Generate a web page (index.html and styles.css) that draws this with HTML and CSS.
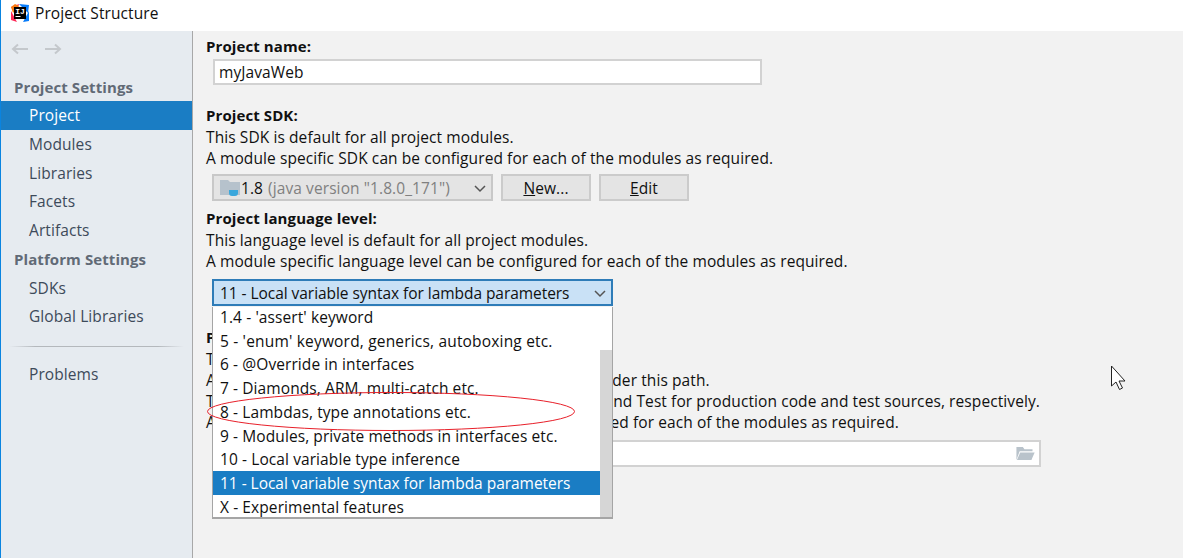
FILE: index.html
```html
<!DOCTYPE html>
<html>
<head>
  <title>Project Structure</title>
  <link rel="stylesheet" href="styles.css">
</head>
<body>
  <div class="titlebar">
    <svg class="app-icon" width="20" height="20" viewBox="0 0 20 20">
      <path d="M1 4 L9 1 L6 12 Z" fill="#fe315d"/>
      <path d="M9 1 L19 2 L18 10 Z" fill="#087cfa"/>
      <path d="M1 8 L7 19 L1 17 Z" fill="#fe2857"/>
      <path d="M13 19 L19 8 L19 18 Z" fill="#087cfa"/>
      <path d="M1 4 L5 1 L9 3 L3 10 Z" fill="#f97a12"/>
      <rect x="4" y="4" width="12" height="12" fill="#000"/>
      <rect x="5.5" y="13" width="5" height="1" fill="#fff"/>
      <text x="5.2" y="11.2" class="app-icon-text">IJ</text>
    </svg>
    <span class="title">Project Structure</span>
  </div>

  <div class="window">
    <div class="sidebar">
      <div class="nav-arrows">
        <svg width="18" height="12" viewBox="0 0 18 12"><path d="M17 6H2M7 1.5 2 6l5 4.500" fill="none" stroke="#c4c8cc" stroke-width="2"/></svg>
        <svg width="18" height="12" viewBox="0 0 18 12"><path d="M1 6h15M11 1.500 16 6l-5 4.500" fill="none" stroke="#c4c8cc" stroke-width="2"/></svg>
      </div>
      <div class="group-title">Project Settings</div>
      <div class="nav-item active">Project</div>
      <div class="nav-item">Modules</div>
      <div class="nav-item">Libraries</div>
      <div class="nav-item">Facets</div>
      <div class="nav-item">Artifacts</div>
      <div class="group-title second">Platform Settings</div>
      <div class="nav-item">SDKs</div>
      <div class="nav-item">Global Libraries</div>
      <div class="nav-sep"></div>
      <div class="nav-item">Problems</div>
    </div>

    <div class="content">
      <div class="label">Project name:</div>
      <div class="text-input name-input">myJavaWeb</div>

      <div class="label sdk-label">Project SDK:</div>
      <div class="desc">This SDK is default for all project modules.</div>
      <div class="desc">A module specific SDK can be configured for each of the modules as required.</div>
      <div class="sdk-row">
        <div class="combo sdk-combo">
          <svg class="sdk-icon" width="21" height="20" viewBox="0 0 21 20">
            <path d="M0 2h8l2 2h10v13H0z" fill="#b6c2cc"/>
            <path d="M9 12h9v3a3 3 0 0 1-3 3h-3a3 3 0 0 1-3-3z" fill="#3aa7dc"/>
          </svg>
          <span>1.8</span><span class="muted">(java version "1.8.0_171")</span>
          <svg class="chevron" width="14" height="8" viewBox="0 0 14 8"><path d="M2 1l5 5 5-5" fill="none" stroke="#555" stroke-width="1.500"/></svg>
        </div>
        <div class="btn"><span><u>N</u>ew...</span></div>
        <div class="btn"><span><u>E</u>dit</span></div>
      </div>

      <div class="label level-label">Project language level:</div>
      <div class="desc">This language level is default for all project modules.</div>
      <div class="desc">A module specific language level can be configured for each of the modules as required.</div>
      <div class="combo level-combo">
        <span>11 - Local variable syntax for lambda parameters</span>
        <svg class="chevron" width="14" height="8" viewBox="0 0 14 8"><path d="M2 1l5 5 5-5" fill="none" stroke="#555" stroke-width="1.500"/></svg>
      </div>

      <div class="label output-label">Project compiler output:</div>
      <div class="desc">This path is used to store all project compilation results.</div>
      <div class="desc">A directory corresponding to each module is created under this path.</div>
      <div class="desc">This directory contains two subdirectories: Production and Test for production code and test sources, respectively.</div>
      <div class="desc">A module specific compiler output path can be configured for each of the modules as required.</div>
      <div class="text-input output-input">
        <svg class="folder" width="20" height="15" viewBox="0 0 18 14">
          <path d="M1 13V1h6l1.500 2H16v2H4z" fill="#b9c3cb"/>
          <path d="M4.500 6H18l-3 7H1.500z" fill="#b9c3cb"/>
        </svg>
      </div>

      <div class="popup">
        <div class="popup-list">
          <div class="popup-item">1.4 - 'assert' keyword</div>
          <div class="popup-item wide">5 - 'enum' keyword, generics, autoboxing etc.</div>
          <div class="popup-item">6 - @Override in interfaces</div>
          <div class="popup-item">7 - Diamonds, ARM, multi-catch etc.</div>
          <div class="popup-item">8 - Lambdas, type annotations etc.</div>
          <div class="popup-item">9 - Modules, private methods in interfaces etc.</div>
          <div class="popup-item">10 - Local variable type inference</div>
          <div class="popup-item selected">11 - Local variable syntax for lambda parameters</div>
          <div class="popup-item">X - Experimental features</div>
        </div>
        <div class="popup-scroll"><div class="popup-thumb"></div></div>
      </div>
    </div>
  </div>

  <!-- red circle drawn on the screenshot -->
  <svg class="annotation" width="372" height="42" viewBox="0 0 372 42">
    <ellipse cx="186" cy="20.500" rx="183.500" ry="19" fill="none" stroke="#e8202a" stroke-width="1"/>
  </svg>

  <svg class="cursor" width="18" height="26" viewBox="0 0 18 26">
    <path d="M1.500 1v20l4.500-4 3.500 7.500 3-1.500-3.500-7h6z" fill="#fff" stroke="#222" stroke-width="1"/>
  </svg>
</body>
</html>
```

FILE: styles.css
```css
:root {
  --blue: #1a7dc4;
  --panel: #f2f2f2;
  --side: #e6ebf0;
  --text: #101010;
}

* {
  box-sizing: border-box;
}

html, body {
  height: 100%;
}

body {
  margin: 0;
  overflow: hidden;
  position: relative;
  display: flex;
  flex-direction: column;
  border-left: 1px solid #0a84e0;
  font-family: "Open Sans", "Noto Sans", Arial, sans-serif;
  font-size: 15.500px;
  letter-spacing: 0.09px;
  color: var(--text);
  background: var(--panel);
}

.titlebar {
  height: 31px;
  flex: none;
  display: flex;
  align-items: center;
  padding: 0 0 5px 9px;
  background: #fff;
}

.app-icon {
  margin-right: 5px;
}

.app-icon-text {
  font-family: "Liberation Mono", monospace;
  font-size: 8px;
  font-weight: 700;
  fill: #fff;
}

.window {
  flex: 1;
  display: flex;
  min-height: 0;
}

.sidebar {
  width: 192px;
  flex: none;
  background: var(--side);
  border-right: 1px solid #a8a8a8;
  color: #3d4a5a;
}

.nav-arrows {
  height: 38px;
  display: flex;
  align-items: center;
  gap: 15px;
  padding: 0 0 3px 10px;
}

.group-title {
  height: 32px;
  display: flex;
  align-items: center;
  padding: 3px 0 0 13px;
  font-weight: 700;
  font-size: 15px;
  color: #616a76;
}

.group-title.second {
  height: 30px;
  margin-top: -1px;
  padding-top: 2px;
}

.nav-item {
  height: 28.700px;
  display: flex;
  align-items: center;
  padding-left: 28px;
}

.nav-item.active {
  background: var(--blue);
  color: #fff;
}

.nav-sep {
  height: 1px;
  margin: 15px 8px 13px;
  background: linear-gradient(to right, var(--side), #b4b8bc 15%, #b4b8bc 85%, var(--side));
}

.content {
  flex: 1;
  position: relative;
  padding: 5px 0 0 13px;
}

.label {
  height: 21px;
  line-height: 21px;
  font-weight: 700;
  font-size: 15px;
}

.desc {
  height: 21px;
  padding-top: 1px;
  line-height: 21px;
}

.text-input {
  height: 26px;
  margin: 2px 0 0 7px;
  padding-left: 4px;
  display: flex;
  align-items: center;
  background: #fff;
  border: 2px solid #d2d2d2;
}

.name-input {
  width: 549px;
}

.sdk-label {
  margin-top: 20px;
}

.sdk-row {
  display: flex;
  gap: 8px;
  margin: 6px 0 0 6px;
}

.combo {
  height: 27px;
  display: flex;
  align-items: center;
  position: relative;
  padding: 1px 0 0 6px;
}

.chevron {
  position: absolute;
  right: 4px;
  top: 9px;
}

.sdk-combo {
  width: 281px;
  background: #e4e4e4;
  border: 2px solid #c8c8c8;
}

.sdk-icon {
  flex: none;
}

.muted {
  margin-left: 5px;
  color: #808080;
}

.btn {
  width: 90px;
  height: 27px;
  display: flex;
  align-items: center;
  justify-content: center;
  background: #e4e4e4;
  border: 2px solid #cbcbcb;
}

.level-label {
  margin-top: 7px;
}

.level-combo {
  width: 401px;
  margin: 8px 0 0 6px;
  letter-spacing: -0.05px;
  background: #c9e1f6;
  border: 2px solid #2e7cb8;
}

.output-label {
  margin-top: 21px;
}

.output-input {
  width: 829px;
  height: 27px;
  margin: 8px 0 0 6px;
  position: relative;
}

.folder {
  position: absolute;
  right: 4px;
  top: 4px;
}

/* dropdown list over the form */
.popup {
  position: absolute;
  left: 19px;
  top: 276px;
  width: 401px;
  height: 212px;
  display: flex;
  overflow: hidden;
  background: #fff;
  border: 1px solid #a5a5a5;
  border-top: 0;
  border-bottom-width: 2px;
}

.popup-list {
  flex: 1;
  margin-top: -2px;
}

.popup-item {
  height: 23.750px;
  display: flex;
  align-items: center;
  padding-left: 7px;
  white-space: nowrap;
}

.popup-item.wide {
  letter-spacing: 0.18px;
}

.popup-item.selected {
  letter-spacing: -0.03px;
  background: var(--blue);
  color: #fff;
}

.popup-scroll {
  width: 12px;
  flex: none;
  padding-top: 43px;
}

.popup-thumb {
  height: 100%;
  background: #d6d6d6;
}

.annotation {
  position: absolute;
  left: 204px;
  top: 391px;
}

.cursor {
  position: absolute;
  left: 1109px;
  top: 365px;
}
```
